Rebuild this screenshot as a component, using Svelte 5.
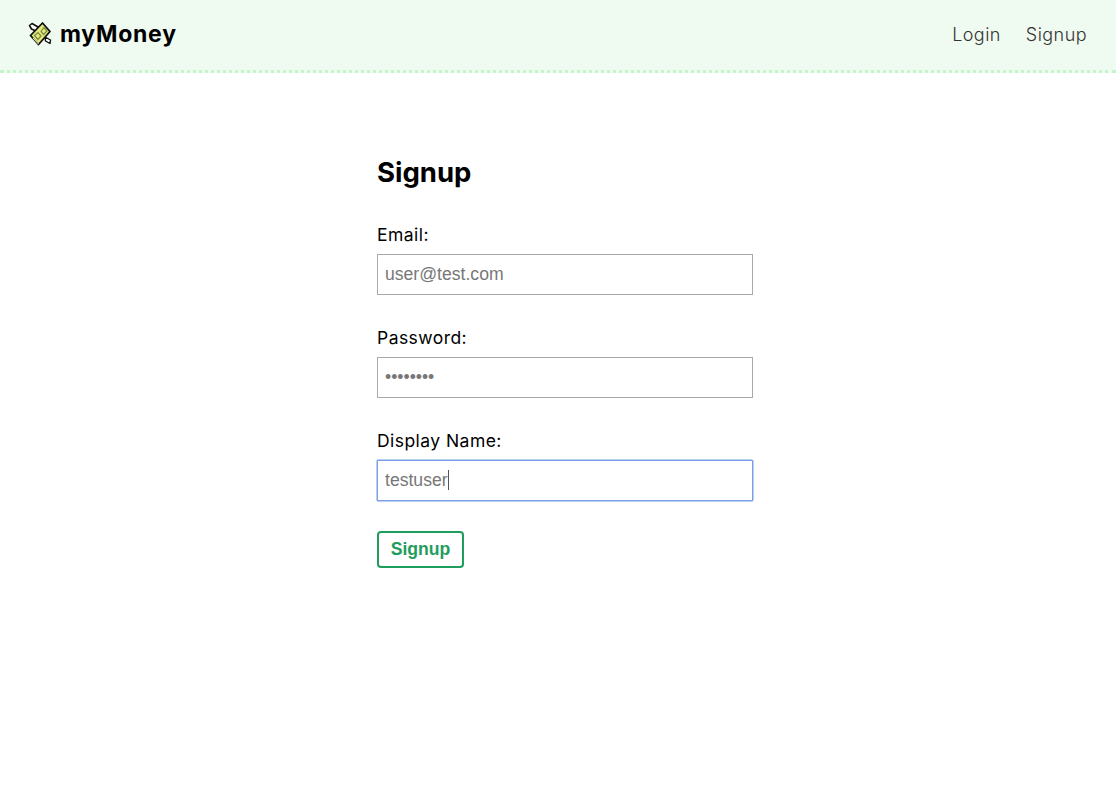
<script>
  let email = "user@test.com";
  let password = "12345678";
  let displayName = "testuser";
</script>

<nav class="navbar">
  <div class="brand">
    <svg class="logo" width="24" height="24" viewBox="0 0 24 24">
      <path d="M1.5 3.5 L4 1.5 L10 5 L8 9 L3.5 7 Z" fill="#fff" stroke="#111" stroke-width="1.6" stroke-linejoin="round" />
      <path d="M17 15 L22.5 18 L22 21.5 L17.5 19 Z" fill="#fff" stroke="#111" stroke-width="1.4" stroke-linejoin="round" />
      <path d="M14.5 1 L22 9.5 L10.5 22.5 L2.5 13.5 Z" fill="#e2ea7c" stroke="#111" stroke-width="1.8" stroke-linejoin="round" />
      <path d="M13 9.5 L16 5.5 L19 9 L15.5 12.5 Z" fill="none" stroke="#7d8840" stroke-width="1.2" />
      <path d="M6.5 13.5 L10 10.5 L13 14 L10 17.5 Z" fill="none" stroke="#7d8840" stroke-width="1.2" />
      <path d="M5 16 L10.5 22" stroke="#f4f6c0" stroke-width="1" />
    </svg>
    <span class="name">myMoney</span>
  </div>
  <ul class="links">
    <li>Login</li>
    <li>Signup</li>
  </ul>
</nav>

<form class="signup" on:submit|preventDefault>
  <h2>Signup</h2>
  <label>
    <span>Email:</span>
    <input type="email" bind:value={email} />
  </label>
  <label>
    <span>Password:</span>
    <input type="password" bind:value={password} />
  </label>
  <label>
    <span>Display Name:</span>
    <div class="field">
      <input class="focused" type="text" bind:value={displayName} />
      <i class="caret"></i>
    </div>
  </label>
  <button>Signup</button>
</form>

<style>
  :global(body) {
    margin: 0;
    background: #fff;
    font-family: Inter, "Open Sans", sans-serif;
  }

  .navbar {
    display: flex;
    justify-content: space-between;
    align-items: center;
    height: 68px;
    padding: 0 29px 2px 28px;
    background: #effaf0;
    border-bottom: 3px dotted #c4f5c9;
  }

  .brand {
    display: flex;
    align-items: center;
    gap: 8px;
  }

  .logo {
    display: block;
  }

  .name {
    font-size: 23px;
    font-weight: 700;
    letter-spacing: 0.75px;
    color: #000;
  }

  .links {
    display: flex;
    gap: 25px;
    margin: 0;
    padding: 0;
    list-style: none;
    font-size: 18px;
    font-weight: 300;
    letter-spacing: 0.45px;
    color: #333;
  }

  .signup {
    box-sizing: border-box;
    width: 390px;
    margin: 0 auto;
    padding: 80px 0 0 14px;
  }

  h2 {
    margin: 0 0 31px;
    font-size: 27.5px;
    line-height: 38px;
    font-weight: 700;
    color: #000;
  }

  label {
    display: block;
    margin-bottom: 30px;
  }

  label span {
    display: block;
    margin-bottom: 6px;
    font-size: 17.5px;
    line-height: 26px;
    letter-spacing: 0.45px;
    color: #000;
  }

  .field {
    position: relative;
  }

  input {
    display: block;
    width: 100%;
    height: 41px;
    box-sizing: border-box;
    padding: 8px 7px;
    border: 1px solid #a9a9a9;
    border-radius: 0;
    outline: none;
    font-family: "Liberation Sans", Arial, sans-serif;
    font-size: 17.6px;
    color: #777;
  }

  input.focused {
    border-color: #7b9ee8;
    box-shadow: 0 0 0 0.5px #7b9ee8;
    border-radius: 1px;
  }

  .caret {
    position: absolute;
    left: 71px;
    top: 10px;
    width: 1px;
    height: 20px;
    background: #555;
  }

  button {
    display: block;
    width: 87px;
    height: 37px;
    padding: 0;
    background: #fff;
    border: 2px solid #1f9d5d;
    border-radius: 4px;
    font-family: "Liberation Sans", Arial, sans-serif;
    font-size: 17.6px;
    font-weight: 700;
    color: #1f9d5d;
  }
</style>
